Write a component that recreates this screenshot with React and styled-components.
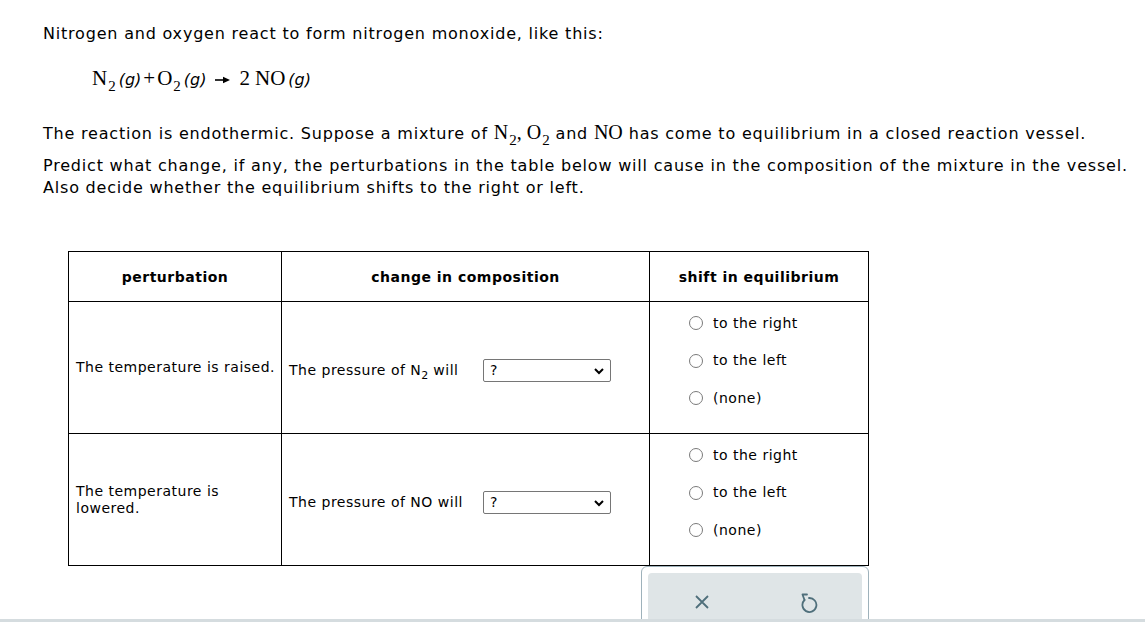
import React from "react"
import styled, { createGlobalStyle } from "styled-components"

const GlobalStyle = createGlobalStyle`
  html, body {
    margin: 0;
    padding: 0;
    background: #fff;
  }
  body {
    font-family: "DejaVu Sans", Verdana, sans-serif;
    color: #000;
    font-size: 16px;
    overflow: hidden;
  }
`

const Page = styled.div`
  width: 1145px;
  height: 622px;
  position: relative;
  overflow: hidden;
  box-sizing: border-box;
  padding: 23px 0 0 43px;
`

const Para = styled.p`
  margin: 0;
  line-height: 22px;
  font-size: 16px;
  letter-spacing: 0.8px;
  margin-top: ${p => p.$top || 0}px;
`

const Equation = styled.div`
  margin: 20px 0 0 49px;
  font-family: "Liberation Serif", "Times New Roman", serif;
  font-size: 21px;
  line-height: 24px;
  white-space: nowrap;
`

const Phase = styled.span`
  font-family: "DejaVu Sans", Verdana, sans-serif;
  font-style: italic;
  font-size: 16px;
  margin-left: ${p => p.$gap || 0}px;
`

const Sub = styled.sub`
  font-size: 15px;
  line-height: 0;
  vertical-align: -6px;
  margin-left: 1px;
`

const Plus = styled.span`
  margin: 0 2px;
`

const Molecule = styled.span`
  margin-left: 5px;
`

const ArrowWrap = styled.span`
  display: inline-block;
  margin: 0 9px 0 9px;
  vertical-align: 1px;
`

const Chem = styled.span`
  font-family: "Liberation Serif", "Times New Roman", serif;
  font-size: 20px;
  letter-spacing: 0;
  line-height: 1;
`

const Table = styled.table`
  border-collapse: collapse;
  margin: 52px 0 0 25px;
  font-size: 14px;
  letter-spacing: 0.5px;
`

const Th = styled.th`
  border: 1px solid #000;
  height: 49px;
  padding: 0;
  font-weight: bold;
  width: ${p => p.$w}px;
`

const Td = styled.td`
  border: 1px solid #000;
  height: 131px;
  padding: 0 5px 0 7px;
  vertical-align: middle;
  line-height: 17px;
`

const ChangeCell = styled.div`
  display: flex;
  align-items: center;
  padding-top: 6px;
`

const ChangeText = styled.span`
  width: 194px;
  flex: none;
`

const SmallSub = styled.sub`
  font-size: 11px;
  line-height: 0;
  vertical-align: -4px;
  letter-spacing: 0;
`

const Select = styled.div`
  width: 128px;
  height: 23px;
  border: 1px solid #767676;
  border-radius: 2px;
  display: flex;
  align-items: center;
  justify-content: space-between;
  padding: 0 5px 0 6px;
  box-sizing: border-box;
  font-size: 14px;
`

const RadioList = styled.div`
  display: flex;
  flex-direction: column;
  gap: 16.5px;
  padding: 0 0 14px 32px;
`

const RadioRow = styled.label`
  display: flex;
  align-items: center;
  gap: 10px;
  font-size: 14px;
  line-height: 21px;
`

const Circle = styled.span`
  width: 14px;
  height: 14px;
  border: 1px solid #7a7a7a;
  border-radius: 50%;
  box-sizing: border-box;
  flex: none;
`

const Panel = styled.div`
  position: absolute;
  left: 641px;
  top: 566px;
  width: 228px;
  height: 70px;
  border: 1px solid #9fb2bb;
  border-radius: 6px;
  box-sizing: border-box;
  background: #fff;
  padding: 6px;
`

const PanelInner = styled.div`
  background: #dfe5e7;
  border-radius: 4px;
  height: 60px;
  display: flex;
  justify-content: space-around;
  padding-top: 17px;
  box-sizing: border-box;
`

const IconBtn = styled.span`
  display: flex;
  width: 24px;
  height: 24px;
  align-items: center;
  justify-content: center;
`

const BottomBar = styled.div`
  position: absolute;
  left: 0;
  right: 0;
  bottom: 0;
  height: 3px;
  background: #d5dcdf;
`

const Chevron = () => (
  <svg width="12" height="8" viewBox="0 0 12 8">
    <path d="M2 2 L6 6 L10 2" fill="none" stroke="#000" strokeWidth="2" />
  </svg>
)

const Arrow = () => (
  <ArrowWrap>
    <svg width="15" height="8" viewBox="0 0 15 8">
      <path d="M0 4 H9" stroke="#000" strokeWidth="1.6" />
      <path d="M8 0.8 L15 4 L8 7.2 Z" fill="#000" />
    </svg>
  </ArrowWrap>
)

const rows = [
  { p: "The temperature is raised.", gas: <>N<SmallSub>2</SmallSub></> },
  { p: "The temperature is lowered.", gas: "NO" }
]

const Radios = () => (
  <RadioList>
    {["to the right", "to the left", "(none)"].map(t => (
      <RadioRow key={t}><Circle />{t}</RadioRow>
    ))}
  </RadioList>
)

export default function App() {
  return (
    <>
      <GlobalStyle />
      <Page>
        <Para>Nitrogen and oxygen react to form nitrogen monoxide, like this:</Para>
        <Equation>
          N<Sub>2</Sub><Phase $gap={3}>(g)</Phase><Plus>+</Plus>O<Sub>2</Sub><Phase $gap={3}>(g)</Phase>
          <Arrow />2<Molecule>NO</Molecule><Phase $gap={3}>(g)</Phase>
        </Equation>
        <Para $top={30}>
          The reaction is endothermic. Suppose a mixture of <Chem>N<Sub>2</Sub>, O<Sub>2</Sub></Chem> and <Chem>NO</Chem> has come to equilibrium in a closed reaction vessel.
        </Para>
        <Para $top={10}>
          Predict what change, if any, the perturbations in the table below will cause in the composition of the mixture in the vessel.<br />
          Also decide whether the equilibrium shifts to the right or left.
        </Para>
        <Table>
          <thead>
            <tr>
              <Th $w={212}>perturbation</Th>
              <Th $w={367}>change in composition</Th>
              <Th $w={218}>shift in equilibrium</Th>
            </tr>
          </thead>
          <tbody>
            {rows.map((r, i) => (
              <tr key={i}>
                <Td>{r.p}</Td>
                <Td>
                  <ChangeCell>
                    <ChangeText>The pressure of {r.gas} will</ChangeText>
                    <Select><span>?</span><Chevron /></Select>
                  </ChangeCell>
                </Td>
                <Td><Radios /></Td>
              </tr>
            ))}
          </tbody>
        </Table>
        <Panel>
          <PanelInner>
            <IconBtn>
              <svg width="18" height="18" viewBox="0 0 18 18">
                <path d="M3 3 L15 15 M15 3 L3 15" stroke="#4f6f7b" strokeWidth="1.8" fill="none" />
              </svg>
            </IconBtn>
            <IconBtn>
              <svg width="22" height="22" viewBox="0 0 22 22" fill="none" stroke="#4f6f7b" strokeWidth="1.8" strokeLinecap="round" strokeLinejoin="round">
                <path d="M9 3.5 H4.5 L6.5 9" />
                <path d="M6.5 9 A7 7 0 1 0 11 7" />
              </svg>
            </IconBtn>
          </PanelInner>
        </Panel>
        <BottomBar />
      </Page>
    </>
  )
}
